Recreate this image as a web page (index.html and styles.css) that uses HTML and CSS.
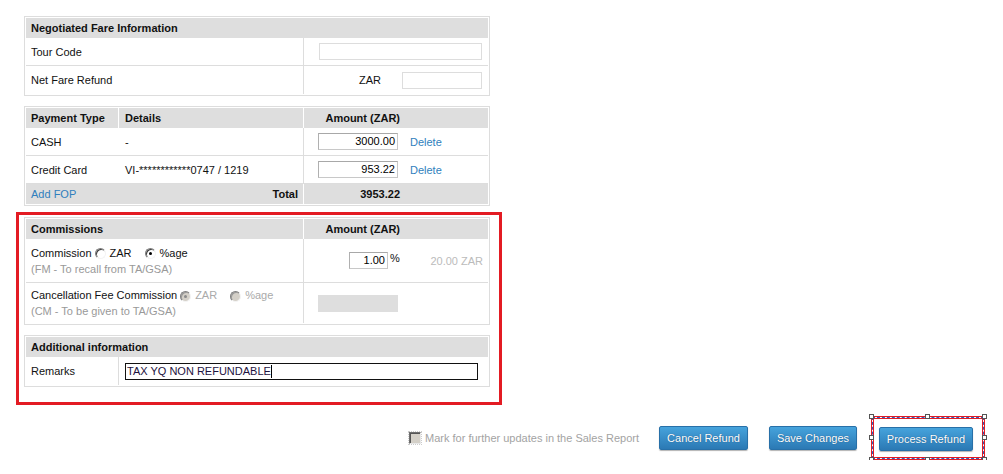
FILE: index.html
```html
<!DOCTYPE html>
<html lang="en">
<head>
    <meta charset="UTF-8">
    <title>Refund Details</title>
    <link rel="stylesheet" href="styles.css">
</head>
<body>
    <div class="page">
        <div class="panel">
            <div class="row head">
                <div class="cell grow">Negotiated Fare Information</div>
            </div>
            <div class="row line">
                <div class="cell w-label sep">Tour Code</div>
                <div class="cell grow to-right"><span class="field tour"></span></div>
            </div>
            <div class="row">
                <div class="cell w-label sep">Net Fare Refund</div>
                <div class="cell grow to-right"><span>ZAR</span><span class="field net"></span></div>
            </div>
        </div>

        <div class="panel">
            <div class="row head">
                <div class="cell w-type sep">Payment Type</div>
                <div class="cell w-details sep">Details</div>
                <div class="cell w-amount">Amount (ZAR)</div>
                <div class="cell grow"></div>
            </div>
            <div class="row line">
                <div class="cell w-type">CASH</div>
                <div class="cell w-details sep">-</div>
                <div class="cell w-amount"><span class="amount-input">3000.00</span></div>
                <div class="cell grow action"><a class="link">Delete</a></div>
            </div>
            <div class="row line">
                <div class="cell w-type">Credit Card</div>
                <div class="cell w-details sep">VI-************0747 / 1219</div>
                <div class="cell w-amount"><span class="amount-input">953.22</span></div>
                <div class="cell grow action"><a class="link">Delete</a></div>
            </div>
            <div class="row foot">
                <div class="cell w-label sep spread"><a class="link">Add FOP</a><span>Total</span></div>
                <div class="cell w-amount">3953.22</div>
                <div class="cell grow"></div>
            </div>
        </div>

        <div class="highlight">
            <div class="panel">
                <div class="row head">
                    <div class="cell w-label sep">Commissions</div>
                    <div class="cell w-amount">Amount (ZAR)</div>
                    <div class="cell grow"></div>
                </div>
                <div class="row line tall">
                    <div class="cell w-label sep stack">
                        <div class="opts">Commission<span class="radio"></span><span class="opt">ZAR</span><span class="radio checked gap"></span><span class="opt">%age</span></div>
                        <div class="hint">(FM - To recall from TA/GSA)</div>
                    </div>
                    <div class="cell grow commission">
                        <span class="amount-input small">1.00</span><span class="pct">%</span><span class="calc">20.00 ZAR</span>
                    </div>
                </div>
                <div class="row tall second">
                    <div class="cell w-label sep stack">
                        <div class="opts">Cancellation Fee Commission<span class="radio checked off"></span><span class="opt off">ZAR</span><span class="radio off gap"></span><span class="opt off">%age</span></div>
                        <div class="hint">(CM - To be given to TA/GSA)</div>
                    </div>
                    <div class="cell grow blocked"><span class="disabled-box"></span></div>
                </div>
            </div>

            <div class="panel">
                <div class="row head">
                    <div class="cell grow">Additional information</div>
                </div>
                <div class="row">
                    <div class="cell w-type sep">Remarks</div>
                    <div class="cell grow remarks"><div class="text-input">TAX YQ NON REFUNDABLE<span class="caret"></span></div></div>
                </div>
            </div>
        </div>

        <div class="actions">
            <label class="mark"><span class="check"></span>Mark for further updates in the Sales Report</label>
            <button class="button cancel">Cancel Refund</button>
            <button class="button save">Save Changes</button>
            <div class="selected">
                <span class="handle tl"></span><span class="handle tc"></span><span class="handle tr"></span>
                <span class="handle ml"></span><span class="handle mr"></span>
                <span class="handle bl"></span><span class="handle bc"></span><span class="handle br"></span>
                <button class="button process">Process Refund</button>
            </div>
        </div>
    </div>
</body>
</html>
```

FILE: styles.css
```css
body {
    margin: 0;
    font-family: "Liberation Sans", Arial, sans-serif;
    font-size: 11px;
    color: #111;
    background: #fff;
}
.page {
    padding: 16px 0 0 16px;
}
.panel {
    width: 466px;
    box-sizing: border-box;
    border: 1px solid #ddd;
    padding: 1px;
    margin-left: 8px;
}
.panel + .panel {
    margin-top: 10px;
}
.highlight {
    width: fit-content;
    border: 3px solid #e31b23;
    padding: 2px 9px 15px 5px;
    margin-top: 6px;
}
.highlight .panel {
    margin-left: 0;
}
.row {
    display: flex;
    height: 28px;
    box-sizing: border-box;
}
.row.line {
    border-bottom: 1px solid #ddd;
}
.row.head,
.row.foot {
    height: 20px;
    background: #dedede;
    font-weight: bold;
}
.row.tall {
    height: 44px;
}
.row.tall.second {
    height: 40px;
}
.cell {
    display: flex;
    align-items: center;
    box-sizing: border-box;
    padding: 0 5px;
    white-space: nowrap;
}
.sep {
    border-right: 1px solid #ddd;
}
.head .sep,
.foot .sep {
    border-right-color: #fff;
}
.grow {
    flex: 1;
}
.w-label {
    width: 278px;
}
.w-type {
    width: 93px;
}
.w-details {
    width: 185px;
    padding-left: 6px;
}
.w-amount {
    width: 106px;
    justify-content: flex-end;
    padding-right: 10px;
}
.to-right {
    justify-content: flex-end;
    padding-right: 6px;
}
.spread {
    justify-content: space-between;
}
.action {
    padding-left: 0;
}
.link {
    color: #2f7fbd;
    font-weight: normal;
    cursor: pointer;
}
.field {
    display: inline-block;
    height: 17px;
    box-sizing: border-box;
    border: 1px solid #ddd;
}
.field.tour {
    width: 163px;
}
.field.net {
    width: 80px;
    margin-left: 21px;
}
.amount-input {
    display: inline-block;
    width: 80px;
    height: 17px;
    line-height: 15px;
    box-sizing: border-box;
    border: 1px solid #c8c8c8;
    border-top-color: #a8a8a8;
    border-left-color: #b0b0b0;
    padding-right: 2px;
    margin-right: 2px;
    text-align: right;
    color: #000;
}
.amount-input.small {
    width: 39px;
    margin-right: 0;
}
.stack {
    flex-direction: column;
    justify-content: center;
    align-items: flex-start;
}
.stack > div {
    height: 16px;
    line-height: 16px;
}
.opts {
    display: flex;
    align-items: center;
}
.hint {
    color: #999;
}
.opt {
    margin-left: 4px;
}
.opt.off {
    color: #aaa;
}
.radio {
    position: relative;
    display: inline-block;
    width: 11px;
    height: 11px;
    box-sizing: border-box;
    margin: 2px 0 0 3px;
    border-radius: 50%;
    border: 1px solid;
    border-color: #808080 #f4f4f4 #f4f4f4 #808080;
    box-shadow: inset 1px 1px 0 #404040;
    background: #fff;
}
.radio.gap {
    margin-left: 13px;
}
.radio.checked::after {
    content: "";
    position: absolute;
    left: 3px;
    top: 3px;
    width: 3px;
    height: 3px;
    border-radius: 50%;
    background: #000;
}
.radio.off {
    background: #d4d0c8;
    box-shadow: inset 1px 1px 0 #9a9a9a;
}
.radio.off.checked::after {
    background: #8a8a8a;
}
.commission {
    padding-left: 45px;
}
.pct {
    margin: 0 0 6px 2px;
}
.calc {
    margin-left: auto;
    color: #bbb;
}
.blocked {
    padding-left: 14px;
}
.disabled-box {
    display: inline-block;
    width: 80px;
    height: 17px;
    background: #dedede;
}
.remarks {
    padding-left: 6px;
}
.text-input {
    width: 353px;
    height: 17px;
    box-sizing: border-box;
    border: 1px solid #111;
    padding-left: 1px;
    line-height: 15px;
    font-size: 11px;
    color: #1d1240;
    display: flex;
    align-items: center;
}
.caret {
    display: inline-block;
    width: 1px;
    height: 13px;
    background: #000;
}
.actions {
    display: flex;
    justify-content: flex-end;
    align-items: center;
    margin-top: 11px;
    padding-right: 18px;
}
.mark {
    display: flex;
    align-items: center;
    color: #a3a3a3;
}
.check {
    display: inline-block;
    width: 12px;
    height: 12px;
    box-sizing: border-box;
    margin-right: 4px;
    border: 1px solid;
    border-color: #6f6f6f #e8e8e8 #e8e8e8 #6f6f6f;
    box-shadow: inset 1px 1px 0 #555;
    background: #d4d0c8;
    outline: 1px dotted #ccc;
}
.button {
    height: 24px;
    padding: 0;
    border: 1px solid #2870a8;
    border-radius: 2px;
    background: linear-gradient(#46a3dc, #2b79b4);
    color: #fff;
    font-family: "Liberation Sans", Arial, sans-serif;
    font-size: 11px;
    white-space: nowrap;
    text-shadow: 0 0 1px rgba(10, 50, 90, 0.7);
    box-shadow: 0 1px 1px rgba(0, 0, 0, 0.3);
    cursor: pointer;
}
.cancel {
    width: 89px;
    margin-left: 20px;
}
.save {
    width: 88px;
    margin-left: 21px;
}
.process {
    width: 94px;
    display: block;
}
.selected {
    position: relative;
    margin-left: 14px;
    border: 1px solid #e31b23;
    padding: 10px 11px 8px 7px;
}
.selected::before {
    content: "";
    position: absolute;
    inset: 0;
    border: 1px dashed #2b5fbf;
}
.selected::after {
    content: "";
    position: absolute;
    inset: 1px;
    border: 1px solid #e31b23;
}
.handle {
    position: absolute;
    width: 5px;
    height: 5px;
    box-sizing: border-box;
    border: 1px solid #555;
    background: #fff;
    z-index: 1;
}
.tl, .tc, .tr { top: -3px; }
.bl, .bc, .br { bottom: -3px; }
.ml, .mr { top: calc(50% - 3px); }
.tl, .ml, .bl { left: -3px; }
.tr, .mr, .br { right: -3px; }
.tc, .bc { left: calc(50% - 3px); }
```
